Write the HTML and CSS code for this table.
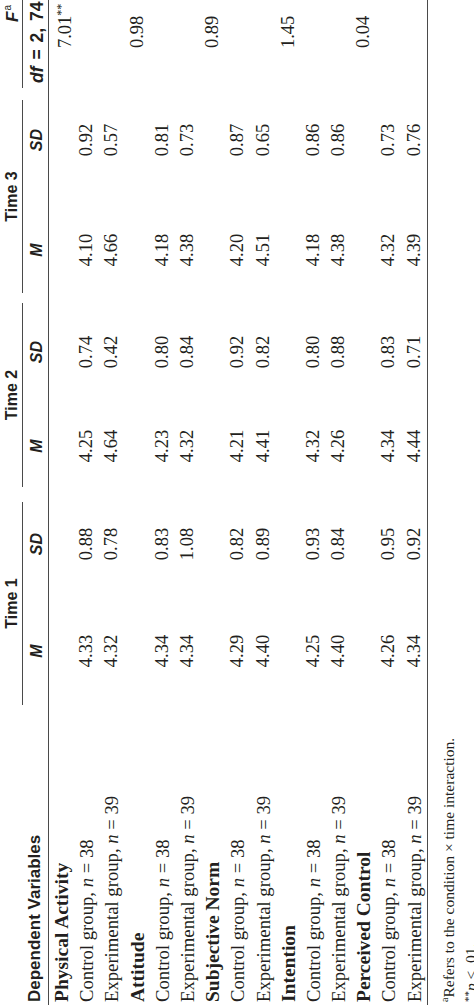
FILE: index.html
```html
<!DOCTYPE html>
<html>
<head>
<meta charset="utf-8">
<link rel="stylesheet" href="styles.css">
</head>
<body>
<div class="viewport">
  <div class="page">
    <div class="table">
      <div class="dv">Dependent Variables</div>
      <div class="span sp1"><span>Time 1</span></div>
      <div class="span sp2"><span>Time 2</span></div>
      <div class="span sp3"><span>Time 3</span></div>
      <div class="span spf"><span class="fhead"><i>F</i><sup>a</sup></span></div>

      <div class="sub"><i>M</i></div>
      <div class="sub"><i>SD</i></div>
      <div class="sub"><i>M</i></div>
      <div class="sub"><i>SD</i></div>
      <div class="sub"><i>M</i></div>
      <div class="sub"><i>SD</i></div>
      <div class="sub df"><span><i>df</i> = 2, 74</span></div>

      <div class="cat">Physical Activity</div>
      <div class="fval">7.01<sup>**</sup></div>
      <div class="lab">Control group, <i>n</i> = 38</div>
      <div class="num">4.33</div><div class="num">0.88</div><div class="num">4.25</div><div class="num">0.74</div><div class="num">4.10</div><div class="num">0.92</div><div class="fval"></div>
      <div class="lab">Experimental group, <i>n</i> = 39</div>
      <div class="num">4.32</div><div class="num">0.78</div><div class="num">4.64</div><div class="num">0.42</div><div class="num">4.66</div><div class="num">0.57</div><div class="fval"></div>

      <div class="cat">Attitude</div>
      <div class="fval">0.98</div>
      <div class="lab">Control group, <i>n</i> = 38</div>
      <div class="num">4.34</div><div class="num">0.83</div><div class="num">4.23</div><div class="num">0.80</div><div class="num">4.18</div><div class="num">0.81</div><div class="fval"></div>
      <div class="lab">Experimental group, <i>n</i> = 39</div>
      <div class="num">4.34</div><div class="num">1.08</div><div class="num">4.32</div><div class="num">0.84</div><div class="num">4.38</div><div class="num">0.73</div><div class="fval"></div>

      <div class="cat">Subjective Norm</div>
      <div class="fval">0.89</div>
      <div class="lab">Control group, <i>n</i> = 38</div>
      <div class="num">4.29</div><div class="num">0.82</div><div class="num">4.21</div><div class="num">0.92</div><div class="num">4.20</div><div class="num">0.87</div><div class="fval"></div>
      <div class="lab">Experimental group, <i>n</i> = 39</div>
      <div class="num">4.40</div><div class="num">0.89</div><div class="num">4.41</div><div class="num">0.82</div><div class="num">4.51</div><div class="num">0.65</div><div class="fval"></div>

      <div class="cat">Intention</div>
      <div class="fval">1.45</div>
      <div class="lab">Control group, <i>n</i> = 38</div>
      <div class="num">4.25</div><div class="num">0.93</div><div class="num">4.32</div><div class="num">0.80</div><div class="num">4.18</div><div class="num">0.86</div><div class="fval"></div>
      <div class="lab">Experimental group, <i>n</i> = 39</div>
      <div class="num">4.40</div><div class="num">0.84</div><div class="num">4.26</div><div class="num">0.88</div><div class="num">4.38</div><div class="num">0.86</div><div class="fval"></div>

      <div class="cat">Perceived Control</div>
      <div class="fval">0.04</div>
      <div class="lab">Control group, <i>n</i> = 38</div>
      <div class="num">4.26</div><div class="num">0.95</div><div class="num">4.34</div><div class="num">0.83</div><div class="num">4.32</div><div class="num">0.73</div><div class="fval"></div>
      <div class="lab">Experimental group, <i>n</i> = 39</div>
      <div class="num">4.34</div><div class="num">0.92</div><div class="num">4.44</div><div class="num">0.71</div><div class="num">4.39</div><div class="num">0.76</div><div class="fval"></div>
    </div>
    <div class="notes">
      <p><sup>a</sup>Refers to the condition × time interaction.</p>
      <p><sup class="stars">**</sup><i>p</i> &lt; .01.</p>
    </div>
  </div>
</div>
</body>
</html>
```

FILE: styles.css
```css
html, body {
  margin: 0;
  padding: 0;
  background: #ffffff;
}

.viewport {
  width: 474px;
  height: 1005px;
  overflow: hidden;
}

.page {
  width: 1040px;
  height: 474px;
  transform-origin: 0 0;
  transform: translateY(1005px) rotate(-90deg);
  color: #231f20;
  font-family: "Liberation Serif", "Times New Roman", serif;
}

.table {
  display: grid;
  grid-template-columns: 300px 108px 106px 90px 98px 106px 114px 118px;
  grid-template-rows: 23px 26px repeat(15, 25.2px);
}

.dv {
  grid-row: 1 / 3;
  grid-column: 1;
  align-self: stretch;
  display: flex;
  align-items: flex-end;
  padding: 0 0 3px 3px;
  border-bottom: 1px solid #4a4a4a;
  box-sizing: border-box;
  font-family: "Liberation Sans", Arial, sans-serif;
  font-weight: bold;
  font-size: 17px;
  line-height: 20px;
}

.span {
  grid-row: 1;
  display: flex;
  align-items: center;
  justify-content: center;
  border-bottom: 1px solid #4a4a4a;
  box-sizing: border-box;
  font-family: "Liberation Sans", Arial, sans-serif;
  font-weight: bold;
  font-size: 16px;
  padding-top: 2px;
}

.sp1 { grid-column: 2 / 4; margin: 0 11px 0 0; }
.sp2 { grid-column: 4 / 6; margin: 0 0 0 4px; }
.sp3 { grid-column: 6 / 8; margin: 0 17px 0 10px; }
.spf {
  grid-column: 8;
  margin: 0 0 0 -5px;
  justify-content: flex-start;
  padding-left: 66px;
  font-size: 17px;
}

.fhead sup {
  font-size: 10px;
  font-style: normal;
  font-weight: normal;
  vertical-align: 7px;
  margin-left: 1px;
}

.sub {
  grid-row: 2;
  display: flex;
  align-items: center;
  justify-content: center;
  padding-top: 3px;
  border-bottom: 1px solid #4a4a4a;
  box-sizing: border-box;
  font-family: "Liberation Sans", Arial, sans-serif;
  font-weight: bold;
  font-size: 16px;
}

.sub.df {
  justify-content: flex-start;
  font-size: 17.5px;
  white-space: pre;
  word-spacing: 2px;
}

.cat {
  grid-column: 1 / 8;
  padding-left: 3px;
  font-weight: bold;
  font-size: 19.5px;
  line-height: 25.2px;
}

.lab {
  grid-column: 1;
  padding-left: 3px;
  font-size: 18.7px;
  line-height: 25.2px;
  white-space: nowrap;
}

.num {
  text-align: center;
  font-size: 18.5px;
  line-height: 25.2px;
}

.fval {
  grid-column: 8;
  padding-left: 35px;
  font-size: 18.5px;
  line-height: 25.2px;
}

.fval sup {
  font-size: 12px;
  vertical-align: 6px;
}

.notes {
  border-top: 1px solid #4a4a4a;
  padding: 7.5px 0 0 3px;
  font-size: 15.5px;
  line-height: 19.5px;
}

.notes p {
  margin: 0;
}

.notes sup {
  font-size: 10px;
  vertical-align: 6px;
}

.notes sup.stars {
  font-size: 11px;
  vertical-align: 4px;
}
```
